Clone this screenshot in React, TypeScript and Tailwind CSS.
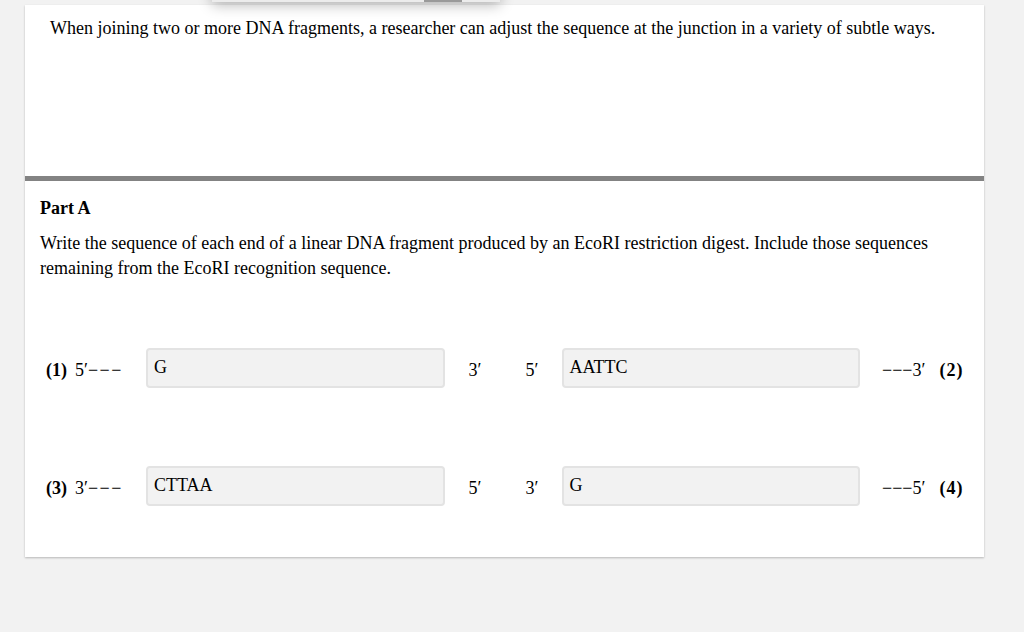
import React from "react";

const serif = { fontFamily: '"Liberation Serif", "Times New Roman", serif' };

function Prime({ n }: { n: string }) {
  return (
    <span>
      {n}
      <span>′</span>
    </span>
  );
}

function Box({ value }: { value: string }) {
  return (
    <div className="h-[40px] flex-1 rounded-[4px] border-2 border-[#e3e3e3] bg-[#f2f2f2] px-[6px] pt-[7px] text-[18px] leading-[20px] text-black">
      {value}
    </div>
  );
}

function Row({
  left,
  leftEnd,
  a,
  mid1,
  mid2,
  b,
  rightEnd,
  right,
}: {
  left: string;
  leftEnd: string;
  a: string;
  mid1: string;
  mid2: string;
  b: string;
  rightEnd: string;
  right: string;
}) {
  return (
    <div className="flex items-start h-[40px] text-[18px] leading-[20px] text-black">
      <div className="w-[121px] pl-[21px] pt-[12px] flex shrink-0">
        <span className="font-bold">({left})</span>
        <span className="ml-[8px]">
          <Prime n={leftEnd} />
          <span className="tracking-[1.5px]">−−−</span>
        </span>
      </div>
      <Box value={a} />
      <div className="w-[117px] shrink-0 flex pt-[12px]">
        <span className="ml-[24px]">
          <Prime n={mid1} />
        </span>
        <span className="ml-[44px]">
          <Prime n={mid2} />
        </span>
      </div>
      <Box value={b} />
      <div className="w-[124px] shrink-0 flex pt-[12px] pl-[22px]">
        <span>−−−</span>
        <Prime n={rightEnd} />
        <span className="font-bold ml-[14px] tracking-[1px]">({right})</span>
      </div>
    </div>
  );
}

export default function App() {
  return (
    <div className="relative min-h-[632px] w-[1024px] bg-[#f2f2f2] overflow-hidden" style={serif}>
      <div className="absolute left-[212px] top-[-40px] h-[42px] w-[288px] bg-[#ececec] shadow-[0_3px_14px_rgba(0,0,0,0.28)]" />
      <div className="absolute left-[424px] top-0 h-[2px] w-[38px] bg-[#9a9a9a]" />
      <div className="pt-[5px] pl-[25px] w-[984px]">
        <div className="bg-white shadow-[0_1px_2px_rgba(0,0,0,0.25)]">
          <div className="h-[171px] pl-[25px] pt-[11px] text-[18px] leading-[24px] text-black">
            When joining two or more DNA fragments, a researcher can adjust the sequence at the junction in a variety of subtle ways.
          </div>
          <div className="h-[5px] bg-[#838383]" />
          <div className="px-[15px] pt-[16px] text-[18px] text-black">
            <div className="font-bold leading-[22px]">Part A</div>
            <div className="mt-[12px] leading-[25px] pr-[40px]">
              Write the sequence of each end of a linear DNA fragment produced by an EcoRI restriction digest. Include those sequences
              remaining from the EcoRI recognition sequence.
            </div>
          </div>
          <div className="pt-[67px] pb-[51px]">
            <Row left="1" leftEnd="5" a="G" mid1="3" mid2="5" b="AATTC" rightEnd="3" right="2" />
            <div className="h-[78px]" />
            <Row left="3" leftEnd="3" a="CTTAA" mid1="5" mid2="3" b="G" rightEnd="5" right="4" />
          </div>
        </div>
      </div>
    </div>
  );
}
